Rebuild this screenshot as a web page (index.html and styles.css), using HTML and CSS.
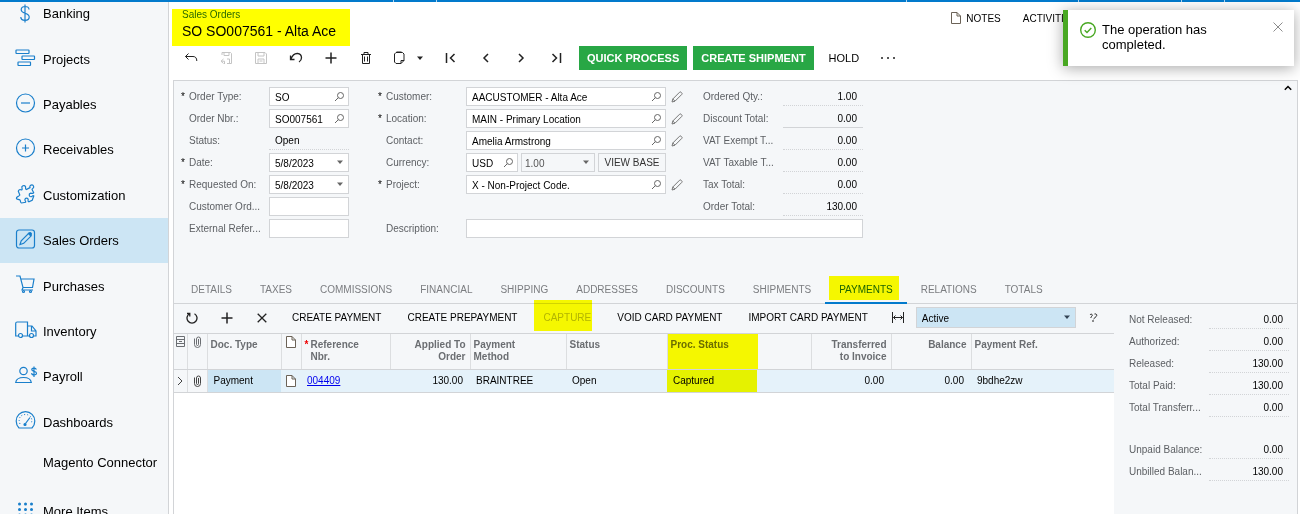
FILE: index.html
```
<!DOCTYPE html>
<html lang="en">
<head>
    <meta charset="UTF-8">
    <meta name="viewport" content="width=device-width, initial-scale=1.0">
    <title>Sales Orders</title>
    <link rel="stylesheet" href="styles.css">
</head>
<body>

    <!-- Shared icons -->
    <svg class="sprite" aria-hidden="true">
        <symbol id="i-search" viewBox="0 0 12 12"><circle cx="7.500" cy="4.500" r="3"/><path d="M5.300 6.700L2 10"/></symbol>
        <symbol id="i-pencil" viewBox="0 0 12 12"><path d="M1 11l.8-3L8.6 1.2a1 1 0 0 1 1.4 0l.8.8a1 1 0 0 1 0 1.4L4 10.2zM1.800 8L4 10.200"/></symbol>
        <symbol id="i-down" viewBox="0 0 8 5"><path d="M1 0.5h6L4 4z"/></symbol>
        <symbol id="i-page" viewBox="0 0 10 12"><path d="M.5.5h5.5l3.500 3.500v7.500h-9zM6 .5V4h3.500"/></symbol>
        <symbol id="i-clip" viewBox="0 0 8 12"><path d="M5.500 3v5.500a1 1 0 0 1-2 0V3a2 2 0 0 1 4 0v5.500a3 3 0 0 1-6 0V2.500"/></symbol>
        <symbol id="i-plus" viewBox="0 0 12 12"><path d="M6 .5v11M.5 6h11"/></symbol>
    </svg>

    <!-- Blue strip at the very top -->
    <div class="topbar">
        <span class="seg seg-logo"></span>
        <span class="seg seg-small"></span>
        <span class="seg seg-search"></span>
        <span class="seg seg-company"></span>
        <span class="seg seg-user"></span>
        <span class="seg seg-small"></span>
        <span class="seg seg-rest"></span>
    </div>

    <div class="layout">

        <!-- Side menu -->
        <nav class="sidebar">
            <div class="menu">
                <a href="#" class="menu-item"><svg class="menu-icon" viewBox="0 0 22 22"><path d="M14 6.500c0-2-1.600-3-4-3s-3.800 1.200-3.800 3.200c0 4.500 8 2.600 8 7.300 0 2.100-1.700 3.300-4.200 3.300S5.800 16 5.800 14M10 1.500v18"/></svg>Banking</a>
                <a href="#" class="menu-item"><svg class="menu-icon" viewBox="0 0 22 22"><rect x="1" y="2" width="13" height="3.500" rx=".5"/><rect x="7" y="8" width="12.500" height="3.500" rx=".5"/><rect x="3" y="14" width="12.500" height="3.500" rx=".5"/></svg>Projects</a>
                <a href="#" class="menu-item"><svg class="menu-icon" viewBox="0 0 22 22"><circle cx="10.500" cy="9" r="9"/><path d="M6 9h9"/></svg>Payables</a>
                <a href="#" class="menu-item"><svg class="menu-icon" viewBox="0 0 22 22"><circle cx="10.500" cy="9" r="9"/><path d="M7 9h7M10.500 5.500v7"/></svg>Receivables</a>
                <a href="#" class="menu-item"><svg class="menu-icon" viewBox="0 0 22 22"><path d="M5 5.500c2 1 2.500 0 2-1.200C6 2 9.300.5 10.500 2.500c.5 1.200-.8 2.500.8 3L15 3.600c-1-2.400 2.600-3.700 3.600-1.400.8 2.200-1.600 2-1.600 3.200l1.700 3.400c-.8 1.400-1.900.4-3 .3-2.400.5-1.800 4 .6 3.600 1.100-.3 1.400-1.600 2.500-.7l-1.600 4.200-3.500 1.600c-1.200-.4-.7-1.300-.5-2.400-.4-1.900-3-1.500-3.300.3 0 1.400 1.300 1.500.7 2.600L6.500 19c-1.500-.7-.6-1.700-1.500-3-1.200-1.300-3.300-.1-3.600-1.600-.4-2.200 2.800-1.800 3.400-3.300l-1.500-4c.2-.7.700-1.300 1.700-1.600z"/></svg>Customization</a>
                <a href="#" class="menu-item active"><svg class="menu-icon" viewBox="0 0 22 22"><rect x="1.500" y="0" width="18" height="18" rx="2.500"/><path d="M5 14.500l1.200-3.700 7.500-7.500 2.500 2.500-7.500 7.500z"/><path class="solid" d="M13.500 3.500l1-.8c1.200-.5 2.300.8 1.800 1.800l-.8 1z"/></svg>Sales Orders</a>
                <a href="#" class="menu-item"><svg class="menu-icon" viewBox="0 0 22 22"><path d="M1 1h4l3 11.500h9.500L19 4H6M8 12.500l-1 2.500h11"/><circle cx="8.500" cy="16.500" r="1"/><circle cx="15.500" cy="16.500" r="1"/></svg>Purchases</a>
                <a href="#" class="menu-item"><svg class="menu-icon" viewBox="0 0 22 22"><path d="M3 15H.7V2.500c0-1 .5-1.500 1.500-1.500h10.300v14H8M12.500 5H17l4 5v5h-2M14.500 15h-2M16.500 5v5H21"/><circle cx="5.500" cy="14.500" r="2"/><circle cx="16.500" cy="14.500" r="2"/></svg>Inventory</a>
                <a href="#" class="menu-item"><svg class="menu-icon" viewBox="0 0 22 22"><circle cx="8.500" cy="5" r="3.700"/><path d="M.7 16.500c.5-3.500 3.500-5 7.800-5s7.300 1.500 7.800 5zM21.300 3.700c-.3-2-4.500-2-4.500.1 0 2.200 4.700 1.100 4.700 3.400 0 2.200-4.700 2.200-4.900-.1M19 .5v10.500"/></svg>Payroll</a>
                <a href="#" class="menu-item"><svg class="menu-icon" viewBox="0 0 22 22"><path d="M4 17c-2-2-2.800-4-2.800-7a9.300 9.300 0 0 1 18.600 0c0 3-.8 5-2.800 7z"/><path class="dotted" d="M5 13c-2.500-6 1-9.500 5.500-9.500S18.500 7 16 13"/><path d="M15 6.500l-4.500 6"/><circle class="solid" cx="10" cy="13.500" r="1"/></svg>Dashboards</a>
            </div>
            <a href="#" class="menu-item plain">Magento Connector</a>
            <a href="#" class="menu-item more"><svg class="menu-icon" viewBox="0 0 22 22"><path class="dots" d="M4.500 3h.01M10.500 3h.01M16.500 3h.01M4.500 8.500h.01M10.500 8.500h.01M16.500 8.500h.01M4.500 14h.01M10.500 14h.01M16.500 14h.01"/></svg>More Items</a>
        </nav>

        <main class="main">

            <!-- Screen title and main toolbar -->
            <header class="header">
                <div class="title-row">
                    <div class="title">
                        <a href="#" class="crumb">Sales Orders</a>
                        <h1>SO SO007561 - Alta Ace</h1>
                    </div>
                    <div class="header-links">
                        <button class="text-btn"><svg class="page" width="10" height="12"><use href="#i-page"/></svg>NOTES</button>
                        <button class="text-btn">ACTIVITIES</button>
                        <button class="text-btn">FILES</button>
                    </div>
                </div>
                <div class="toolbar">
                    <button class="icon-btn" aria-label="Back"><svg width="14" height="12" viewBox="0 0 14 12"><path d="M4.500 1.500L1.500 4.500l3 3M1.500 4.500H9c2.500 0 3.800 1.500 3.800 4.500"/></svg></button>
                    <button class="icon-btn" disabled aria-label="Save and close"><svg width="14" height="14" viewBox="0 0 14 14"><path d="M3 4V1.500h8.500l1 1v10H8M5 1.500V4.500h5v-3M4.500 8L2 10.200l2.500 2.300M2 10.200h3.500V13M8 8h2.500v4"/></svg></button>
                    <button class="icon-btn" disabled aria-label="Save"><svg width="14" height="14" viewBox="0 0 14 14"><path d="M1.500 1.500h9.500l1.500 1.500v9.500h-11zM4 1.500v3.500h6v-3.500M4 12.500V8h6v4.500M5.500 10h3"/></svg></button>
                    <button class="icon-btn" aria-label="Undo"><svg class="medium" width="14" height="12" viewBox="0 0 14 12"><path d="M1.500 3.500v4h4M1.800 7.200C3.500 3 6 1.300 8.500 1.500c2.500.2 4 2 4 4.300 0 1.800-.8 3.200-2.500 4.200"/></svg></button>
                    <button class="icon-btn" aria-label="Add"><svg class="bold" width="12" height="12"><use href="#i-plus"/></svg></button>
                    <button class="icon-btn" aria-label="Delete"><svg width="12" height="14" viewBox="0 0 12 14"><path d="M1 3.500h10M4 3V1.500h4V3M2.500 3.500v9h7v-9M4.500 5.500v5M7.500 5.500v5"/></svg></button>
                    <button class="icon-btn wide" aria-label="Clipboard"><svg width="12" height="14" viewBox="0 0 12 14"><path d="M8 12.500H3L1.500 11V3L3 1.500h6.500L11 3v6.500zM8 12.500v-3h3M3.500 1h5"/></svg><svg class="arrow" width="8" height="5"><use href="#i-down"/></svg></button>
                    <button class="icon-btn" aria-label="First"><svg class="bold" width="12" height="10" viewBox="0 0 12 10"><path d="M1.500 0v10M9.500 1L5.500 5l4 4"/></svg></button>
                    <button class="icon-btn" aria-label="Previous"><svg class="bold" width="12" height="10" viewBox="0 0 12 10"><path d="M8 1L4 5l4 4"/></svg></button>
                    <button class="icon-btn" aria-label="Next"><svg class="bold" width="12" height="10" viewBox="0 0 12 10"><path d="M4 1l4 4-4 4"/></svg></button>
                    <button class="icon-btn" aria-label="Last"><svg class="bold" width="12" height="10" viewBox="0 0 12 10"><path d="M2.500 1l4 4-4 4M10.500 0v10"/></svg></button>
                    <button class="green-btn">QUICK PROCESS</button>
                    <button class="green-btn">CREATE SHIPMENT</button>
                    <button class="hold-btn">HOLD</button>
                    <button class="icon-btn" aria-label="More"><svg class="ellipsis" width="16" height="4" viewBox="0 0 16 4"><path d="M2 2h.01M8 2h.01M14 2h.01"/></svg></button>
                </div>
            </header>

            <div class="panel">

                <!-- Order summary form -->
                <form class="summary">
                    <div class="col col-order">
                        <div class="row required"><label for="order-type">Order Type:</label><div class="field"><input id="order-type" value="SO"><button type="button" aria-label="Find"><svg width="12" height="12"><use href="#i-search"/></svg></button></div></div>
                        <div class="row"><label for="order-nbr">Order Nbr.:</label><div class="field"><input id="order-nbr" value="SO007561"><button type="button" aria-label="Find"><svg width="12" height="12"><use href="#i-search"/></svg></button></div></div>
                        <div class="row"><label for="status">Status:</label><output id="status" class="value left">Open</output></div>
                        <div class="row required"><label for="date">Date:</label><div class="field"><input id="date" value="5/8/2023"><button type="button" aria-label="Pick"><svg class="arrow" width="8" height="5"><use href="#i-down"/></svg></button></div></div>
                        <div class="row required"><label for="requested">Requested On:</label><div class="field"><input id="requested" value="5/8/2023"><button type="button" aria-label="Pick"><svg class="arrow" width="8" height="5"><use href="#i-down"/></svg></button></div></div>
                        <div class="row"><label for="cust-order">Customer Ord...</label><div class="field"><input id="cust-order"></div></div>
                        <div class="row"><label for="ext-ref">External Refer...</label><div class="field"><input id="ext-ref"></div></div>
                    </div>

                    <div class="col-right">
                        <div class="col-pair">
                            <div class="col col-customer">
                                <div class="row required"><label for="customer">Customer:</label><div class="field"><input id="customer" value="AACUSTOMER - Alta Ace"><button type="button" aria-label="Find"><svg width="12" height="12"><use href="#i-search"/></svg></button></div><button type="button" class="edit" aria-label="Edit"><svg width="12" height="12"><use href="#i-pencil"/></svg></button></div>
                                <div class="row required"><label for="location">Location:</label><div class="field"><input id="location" value="MAIN - Primary Location"><button type="button" aria-label="Find"><svg width="12" height="12"><use href="#i-search"/></svg></button></div><button type="button" class="edit" aria-label="Edit"><svg width="12" height="12"><use href="#i-pencil"/></svg></button></div>
                                <div class="row"><label for="contact">Contact:</label><div class="field"><input id="contact" value="Amelia Armstrong"><button type="button" aria-label="Find"><svg width="12" height="12"><use href="#i-search"/></svg></button></div><button type="button" class="edit" aria-label="Edit"><svg width="12" height="12"><use href="#i-pencil"/></svg></button></div>
                                <div class="row"><label for="currency">Currency:</label>
                                    <div class="currency">
                                        <div class="field"><input id="currency" value="USD"><button type="button" aria-label="Find"><svg width="12" height="12"><use href="#i-search"/></svg></button></div>
                                        <div class="field rate"><select aria-label="Rate"><option>1.00</option></select><svg class="arrow" width="8" height="5"><use href="#i-down"/></svg></div>
                                        <button type="button" class="base-btn">VIEW BASE</button>
                                    </div>
                                </div>
                                <div class="row required"><label for="project">Project:</label><div class="field"><input id="project" value="X - Non-Project Code."><button type="button" aria-label="Find"><svg width="12" height="12"><use href="#i-search"/></svg></button></div><button type="button" class="edit" aria-label="Edit"><svg width="12" height="12"><use href="#i-pencil"/></svg></button></div>
                            </div>
                            <div class="col col-totals">
                                <div class="row"><label for="qty">Ordered Qty.:</label><output id="qty" class="value">1.00</output></div>
                                <div class="row"><label for="discount">Discount Total:</label><output id="discount" class="value line">0.00</output></div>
                                <div class="row"><label for="vat-exempt">VAT Exempt T...</label><output id="vat-exempt" class="value">0.00</output></div>
                                <div class="row"><label for="vat-taxable">VAT Taxable T...</label><output id="vat-taxable" class="value">0.00</output></div>
                                <div class="row"><label for="tax-total">Tax Total:</label><output id="tax-total" class="value">0.00</output></div>
                                <div class="row"><label for="order-total">Order Total:</label><output id="order-total" class="value">130.00</output></div>
                            </div>
                        </div>
                        <div class="row description"><label for="description">Description:</label><div class="field"><input id="description"></div></div>
                    </div>
                    <button type="button" class="collapse" aria-label="Collapse"><svg class="bold" width="8" height="6" viewBox="0 0 8 6"><path d="M.8 4.700L4 1.500l3.200 3.200"/></svg></button>
                </form>

                <!-- Tabs -->
                <div class="tabs" role="tablist">
                    <button role="tab">DETAILS</button>
                    <button role="tab">TAXES</button>
                    <button role="tab">COMMISSIONS</button>
                    <button role="tab">FINANCIAL</button>
                    <button role="tab">SHIPPING</button>
                    <button role="tab">ADDRESSES</button>
                    <button role="tab">DISCOUNTS</button>
                    <button role="tab">SHIPMENTS</button>
                    <button role="tab" class="current" aria-selected="true">PAYMENTS</button>
                    <button role="tab">RELATIONS</button>
                    <button role="tab">TOTALS</button>
                </div>

                <div class="payments">
                    <section class="grid">
                        <div class="grid-toolbar">
                            <button class="icon-btn" aria-label="Refresh"><svg class="medium" width="12" height="12" viewBox="0 0 12 12"><path d="M8.500 1.700a5 5 0 1 1-5 0M3.800 4.500V1.500H1"/></svg></button>
                            <button class="icon-btn" aria-label="Add"><svg class="bold" width="12" height="12"><use href="#i-plus"/></svg></button>
                            <button class="icon-btn" aria-label="Remove"><svg class="medium" width="10" height="10" viewBox="0 0 10 10"><path d="M.7.7l8.600 8.600M9.300.7L.7 9.300"/></svg></button>
                            <button class="action">CREATE PAYMENT</button>
                            <button class="action">CREATE PREPAYMENT</button>
                            <button class="action capture" disabled>CAPTURE</button>
                            <button class="action">VOID CARD PAYMENT</button>
                            <button class="action">IMPORT CARD PAYMENT</button>
                            <button class="icon-btn" aria-label="Fit to screen"><svg width="14" height="12" viewBox="0 0 14 12"><path d="M1.500 0v11M12.500 0v11M2.500 5.500h9M4.500 3.500l-2 2 2 2M9.500 3.500l2 2-2 2"/></svg></button>
                            <div class="field filter"><select aria-label="Filter"><option>Active</option></select><svg class="arrow" width="8" height="5"><use href="#i-down"/></svg></div>
                            <button class="icon-btn" aria-label="Filter settings"><svg width="9" height="9" viewBox="0 0 9 9"><path d="M1 2c.5-1.300 2.500-1 2.300.4C3.200 3.500 1.500 3.500 2 5M5.500 1c2-.5 3 1 1.700 2.500L4.500 6M3 8h2"/></svg></button>
                        </div>
                        <table>
                            <colgroup>
                                <col class="w-select"><col class="w-icon"><col class="w-type"><col class="w-icon"><col class="w-ref"><col class="w-num"><col class="w-method"><col class="w-status"><col class="w-proc"><col class="w-num"><col class="w-num"><col>
                            </colgroup>
                            <thead>
                                <tr>
                                    <th class="ico"><svg width="9" height="11" viewBox="0 0 9 11"><path d="M.5.5h8v10h-8zM.5 3.500h8M.5 7.500h8M3 5.500h3"/></svg></th>
                                    <th class="ico"><svg width="8" height="12"><use href="#i-clip"/></svg></th>
                                    <th>Doc. Type</th>
                                    <th class="ico"><svg class="page" width="10" height="12"><use href="#i-page"/></svg></th>
                                    <th class="ref"><i>*</i><span>Reference Nbr.</span></th>
                                    <th class="num">Applied To Order</th>
                                    <th>Payment<br>Method</th>
                                    <th>Status</th>
                                    <th class="marked">Proc. Status</th>
                                    <th class="num">Transferred<br>to Invoice</th>
                                    <th class="num">Balance</th>
                                    <th>Payment Ref.</th>
                                </tr>
                            </thead>
                            <tbody>
                                <tr>
                                    <td class="ico gray"><svg width="6" height="10" viewBox="0 0 6 10"><path d="M1 1l4 4-4 4"/></svg></td>
                                    <td class="ico gray"><svg width="8" height="12"><use href="#i-clip"/></svg></td>
                                    <td class="selected">Payment</td>
                                    <td class="ico"><svg class="page" width="10" height="12"><use href="#i-page"/></svg></td>
                                    <td><a href="#">004409</a></td>
                                    <td class="num">130.00</td>
                                    <td>BRAINTREE</td>
                                    <td>Open</td>
                                    <td class="marked">Captured</td>
                                    <td class="num">0.00</td>
                                    <td class="num">0.00</td>
                                    <td>9bdhe2zw</td>
                                </tr>
                            </tbody>
                        </table>
                    </section>

                    <!-- Payment totals -->
                    <aside class="col side-totals">
                        <div class="row"><label for="not-released">Not Released:</label><output id="not-released" class="value">0.00</output></div>
                        <div class="row"><label for="authorized">Authorized:</label><output id="authorized" class="value">0.00</output></div>
                        <div class="row"><label for="released">Released:</label><output id="released" class="value">130.00</output></div>
                        <div class="row"><label for="total-paid">Total Paid:</label><output id="total-paid" class="value">130.00</output></div>
                        <div class="row"><label for="transferred">Total Transferr...</label><output id="transferred" class="value">0.00</output></div>
                        <div class="row spaced"><label for="unpaid">Unpaid Balance:</label><output id="unpaid" class="value">0.00</output></div>
                        <div class="row"><label for="unbilled">Unbilled Balan...</label><output id="unbilled" class="value">130.00</output></div>
                    </aside>
                </div>
            </div>
        </main>
    </div>

    <!-- Notification -->
    <div class="toast" role="status">
        <svg class="check" width="16" height="16" viewBox="0 0 16 16"><circle cx="8" cy="8" r="7.300"/><path d="M4.700 8.200l2.300 2.300 4.300-4.500"/></svg>
        <p>The operation has completed.</p>
        <button aria-label="Close"><svg width="10" height="10" viewBox="0 0 10 10"><path d="M.5.5l9 9M9.500.5l-9 9"/></svg></button>
    </div>

</body>
</html>
```
FILE: styles.css
```
/* General styles */
* {
    box-sizing: border-box;
}

body {
    margin: 0;
    height: 100vh;
    display: flex;
    flex-direction: column;
    overflow: hidden;
    background-color: #fff;
    color: #000;
    font-family: "Liberation Sans", Arial, sans-serif;
    font-size: 10px;
}

button,
input,
select {
    font: inherit;
    color: inherit;
    margin: 0;
    padding: 0;
    border: none;
    border-radius: 0;
    background: none;
    outline: none;
}

svg {
    display: block;
    flex: none;
    fill: none;
    stroke: currentColor;
    stroke-width: 1;
}

svg.medium {
    stroke-width: 1.3;
}

svg.bold {
    stroke-width: 1.5;
}

svg.arrow {
    fill: currentColor;
    stroke: none;
}

svg.page {
    color: #6b6257;
    fill: #fff;
}

.sprite {
    position: absolute;
    width: 0;
    height: 0;
}

/* Top strip */
.topbar {
    display: flex;
    flex: none;
    height: 2px;
    background-color: #027acc;
}

.seg {
    border-right: 1px solid #b3d7f0;
}

.seg-logo { width: 394px; }
.seg-small { width: 43px; }
.seg-search { flex: 1; }
.seg-company { width: 172px; }
.seg-user { width: 103px; }
.seg-rest { width: 75px; border: none; }

.layout {
    display: flex;
    flex: 1;
    min-height: 0;
}

/* Side menu */
.sidebar {
    width: 169px;
    flex: none;
    overflow: hidden;
    background-color: #f5f7f9;
    border-right: 1px solid #d2d4d7;
}

.menu {
    display: flex;
    flex-direction: column;
    height: 454px;
    margin-top: -11px;
}

.menu-item {
    display: flex;
    flex: 1;
    align-items: center;
    gap: 6px;
    padding-left: 15px;
    color: #000;
    font-size: 13px;
    text-decoration: none;
    white-space: nowrap;
}

.menu-item.active {
    background-color: #cce5f4;
}

.menu-item.plain {
    height: 35px;
    padding-left: 43px;
}

.menu-item.more {
    height: 63px;
}

.menu-icon {
    width: 22px;
    height: 22px;
    stroke: #1a7fcb;
    stroke-width: 1.2;
    overflow: visible;
}

.menu-icon .solid {
    fill: #027acc;
}

.menu-icon .dotted {
    stroke-width: 1;
    stroke-dasharray: 1 2;
}

.menu-icon .dots {
    stroke-width: 3;
    stroke-linecap: round;
}

/* Title and toolbar */
.main {
    display: flex;
    flex: 1;
    flex-direction: column;
    min-width: 0;
    padding: 7px 2px 0 4px;
}

.title-row {
    display: flex;
    justify-content: space-between;
    height: 37px;
}

.title {
    padding: 0 14px 0 10px;
    margin-left: -1px;
    background-color: #ff0;
}

.crumb {
    display: block;
    line-height: 12px;
    color: #2b6b00;
    text-decoration: none;
}

h1 {
    margin: 2px 0 0;
    font-size: 14px;
    font-weight: normal;
    line-height: 16px;
}

.header-links {
    display: flex;
    gap: 22px;
    height: 18px;
    padding-right: 171px;
}

.text-btn {
    display: flex;
    align-items: center;
    gap: 5px;
}

.toolbar,
.grid-toolbar {
    display: flex;
    align-items: center;
}

.toolbar {
    height: 34px;
    padding-bottom: 10px;
}

.icon-btn {
    display: flex;
    align-items: center;
    justify-content: center;
    gap: 11px;
    width: 35px;
    height: 24px;
    flex: none;
    color: #222;
}

.icon-btn.wide {
    width: 50px;
}

.icon-btn:disabled {
    color: #c4c4c4;
}

.ellipsis {
    stroke-width: 2;
    stroke-linecap: round;
}

.green-btn {
    height: 24px;
    margin-left: 6px;
    padding: 0 8px;
    background-color: #28a745;
    color: #fff;
    font-size: 11px;
    font-weight: bold;
}

.hold-btn {
    padding: 0 11px 0 15px;
    font-size: 11px;
}

/* Gray panel under the toolbar */
.panel {
    display: flex;
    flex: 1;
    flex-direction: column;
    min-height: 0;
    background-color: #f5f7f9;
    border: 1px solid #d2d4d7;
    border-bottom: none;
}

/* Summary form */
.summary {
    position: relative;
    display: flex;
    gap: 29px;
    height: 195px;
    padding: 6px 8px;
}

.collapse {
    position: absolute;
    top: 4px;
    right: 5px;
}

.col {
    display: flex;
    flex-direction: column;
    gap: 3px;
}

.col-pair {
    display: flex;
    gap: 20px;
}

.row {
    display: flex;
    align-items: center;
    height: 19px;
}

.row label {
    position: relative;
    width: 80px;
    flex: none;
    padding-bottom: 1px;
    color: #5c5f63;
    white-space: nowrap;
}

/* Star in front of a required field */
.required label::before {
    content: "*";
    position: absolute;
    left: -8px;
    color: #000;
}

.col-order {
    width: 167px;
    padding-left: 7px;
}

.col-customer {
    width: 297px;
}

.col-right {
    margin-left: 1px;
    padding-left: 7px;
}

.field {
    display: flex;
    flex: 1;
    align-items: center;
    height: 19px;
    min-width: 0;
    padding-right: 3px;
    background-color: #fff;
    border: 1px solid #d2d4d7;
}

.field input,
.field select {
    flex: 1;
    width: 0;
    min-width: 0;
    height: 17px;
    padding: 1px 0 0 5px;
    appearance: none;
}

.field button {
    color: #666;
}

.field .arrow {
    margin-right: 1px;
    color: #666;
}

.edit {
    width: 12px;
    margin-left: 5px;
    color: #777;
}

.currency {
    display: grid;
    grid-template-columns: 52px 74px 68px;
    gap: 3px;
    margin-right: 17px;
}

.rate {
    background-color: #f5f7f9;
    color: #555;
}

.rate select {
    padding-left: 3px;
}

.base-btn {
    border: 1px solid #d2d4d7;
    color: #333;
    white-space: nowrap;
}

.value {
    flex: 1;
    height: 19px;
    padding-right: 6px;
    border-bottom: 1px dotted #d2d4d7;
    line-height: 19px;
    text-align: right;
}

.value.left {
    padding-left: 6px;
    text-align: left;
}

.value.line {
    border-bottom-style: solid;
}

.col-totals {
    width: 160px;
}

.description {
    margin-top: 3px;
}

/* Tabs */
.tabs {
    display: flex;
    flex: none;
    height: 28px;
    padding-left: 3px;
    border-bottom: 1px solid #d2d4d7;
}

.tabs button {
    padding: 0 14px 2px;
    height: 28px;
    color: #7b7d80;
}

.tabs .current {
    border-bottom: 2px solid #027acc;
    padding-bottom: 0;
    background: linear-gradient(#f5f700, #f5f700) 4px 0 / calc(100% - 12px) 24px no-repeat;
    color: #1b6400;
}

/* Payments tab */
.payments {
    display: flex;
    flex: 1;
    min-height: 0;
}

.grid {
    flex: 1;
    min-width: 0;
    background-color: #fff;
}

.grid-toolbar {
    height: 30px;
    padding-bottom: 2px;
    background-color: #f5f7f9;
    border-bottom: 1px solid #d2d4d7;
}

.action {
    flex: none;
    padding: 0 13px;
}

.capture {
    position: relative;
    color: #b3b5b8;
}

/* Highlighter mark over the capture button */
.capture::after {
    content: "";
    position: absolute;
    top: -12px;
    right: 12px;
    left: 4px;
    height: 31px;
    background-color: #ff0;
    mix-blend-mode: multiply;
}

.filter {
    flex: 0 0 160px;
    height: 21px;
    background-color: #cce5f4;
}

.filter .arrow {
    color: #345;
}

table {
    width: 100%;
    table-layout: fixed;
    border-collapse: collapse;
}

.w-select { width: 13px; }
.w-icon { width: 20px; }
.w-type { width: 74px; }
.w-ref { width: 89px; }
.w-num { width: 80px; }
.w-method { width: 96px; }
.w-status { width: 101px; }
.w-proc { width: 144px; }

th {
    height: 35px;
    padding: 5px 4px 0 3px;
    background-color: #f5f7f9;
    border-right: 1px solid #dcdee0;
    border-bottom: 1px solid #d2d4d7;
    color: #6b6e72;
    line-height: 12px;
    text-align: left;
    vertical-align: top;
}

td {
    height: 23px;
    padding: 0 7px 0 6px;
    background-color: #e5f2fa;
    border-bottom: 1px solid #d2d4d7;
}

th:last-child {
    border-right: none;
}

.num {
    text-align: right;
}

.ico {
    padding: 0;
}

th.ico {
    padding-top: 2px;
}

.ico svg {
    margin: 0 auto;
}

.gray {
    background-color: #f5f7f9;
    border-right: 1px solid #dcdee0;
    color: #444;
}

.ref i {
    float: left;
    width: 6px;
    color: #e00;
    font-style: normal;
}

.ref span {
    display: block;
    width: 60px;
    margin-left: 6px;
}

.selected {
    background-color: #cce5f4;
}

th.marked {
    background: linear-gradient(#f5f700, #f5f700) 0 0 / 90px 100% no-repeat #f5f7f9;
    color: #6b6e00;
}

td.marked {
    background: linear-gradient(#e5f200, #e5f200) 0 0 / 90px 100% no-repeat #e5f2fa;
}

td a {
    color: #00e;
}

.side-totals {
    width: 183px;
    padding: 6px 8px 0 15px;
}

.side-totals .spaced {
    margin-top: 20px;
}

/* Notification */
.toast {
    position: absolute;
    top: 10px;
    right: 6px;
    display: flex;
    align-items: flex-start;
    width: 231px;
    height: 56px;
    padding: 12px 11px 0 12px;
    background-color: #fff;
    border-left: 5px solid #49a823;
    box-shadow: 0 2px 14px rgba(0, 0, 0, 0.35);
}

.toast .check {
    color: #49a823;
    stroke-width: 1.4;
}

.toast p {
    flex: 1;
    margin: 0 40px 0 6px;
    font-size: 13px;
    line-height: 15px;
}

.toast button {
    color: #8c8c8c;
}
```
